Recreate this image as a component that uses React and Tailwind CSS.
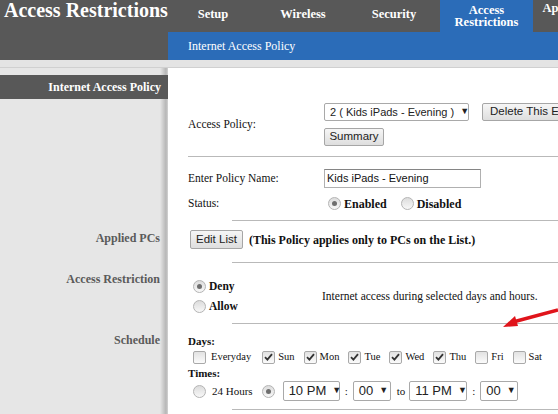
import React from 'react';

const serif = "font-['Liberation_Serif',serif]";
const sans = "font-['Liberation_Sans',Arial,sans-serif]";

// left rail: flat grey with a soft shade along its right edge
const rail = 'bg-[linear-gradient(to_right,#e6e6e6_160px,#b6b6b6_166px,#d4d4d4_168px)]';

const tabs = [
  { label: 'Setup', w: 'w-[90px]' },
  { label: 'Wireless', w: 'w-[90px]' },
  { label: 'Security', w: 'w-[92px]' },
  { label: ['Access', 'Restrictions'], w: 'w-[93px]', active: true },
  { label: ['Applications &', 'Gaming'], w: 'w-[100px]', top: true },
];

const Radio = ({ checked }) => (
  <span className="flex items-center justify-center w-[13px] h-[13px] shrink-0 rounded-full border border-[#b4b4b4] bg-gradient-to-b from-[#dcdcdc] to-[#f8f8f8]">
    {checked && <span className="w-[5px] h-[5px] rounded-full bg-[#6e6e6e]" />}
  </span>
);

const Checkbox = ({ checked }) => (
  <span className="flex items-center justify-center w-[13px] h-[13px] shrink-0 rounded-[2px] border border-[#a9a9a9] bg-gradient-to-b from-[#e2e2e2] to-[#fbfbfb]">
    {checked && (
      <svg width="9" height="8" viewBox="0 0 9 8">
        <path d="M1 4.2 L3.4 6.6 L8 1.2" fill="none" stroke="#333" strokeWidth="1.8" />
      </svg>
    )}
  </span>
);

const Button = ({ children, className = '' }) => (
  <span className={`${sans} inline-flex items-center px-[5px] text-[11.5px] text-[#222] border border-[#a6a6a6] rounded-[2px] bg-gradient-to-b from-[#f6f6f6] to-[#dedede] ${className}`}>
    {children}
  </span>
);

const Select = ({ children, className = '' }) => (
  <span className={`${sans} inline-flex items-center justify-between px-[5px] text-[#222] bg-white border border-[#a9a9a9] rounded-[2px] ${className}`}>
    <span>{children}</span>
    <span className="text-[9px] ml-[6px]">▼</span>
  </span>
);

const Row = ({ label, labelClass = 'pt-[8px]', inset = 'ml-[64px]', children }) => (
  <div className="grid grid-cols-[168px_1fr]">
    <div className={`${rail} ${labelClass}`}>
      {typeof label === 'string' ? (
        <div className="pr-[8px] text-right text-[12px] leading-[14px] font-bold text-[#5a5a5a]">{label}</div>
      ) : (
        label
      )}
    </div>
    <div className="flex flex-col">
      <div className="flex-1">{children}</div>
      <div className={`${inset} h-px bg-[#b9b9b9]`} />
    </div>
  </div>
);

export default function App() {
  return (
    <div className={`relative w-[558px] h-[414px] overflow-hidden bg-white ${serif}`}>
      {/* top bar: page title + tabs + sub menu */}
      <div className="grid grid-cols-[168px_1fr] bg-[#585858] h-[60px]">
        <div className="pl-[4px] text-[20px] font-bold text-white leading-[20px] whitespace-nowrap">
          Access Restrictions
        </div>
        <div className="flex flex-col overflow-hidden">
          <div className="flex h-[32px] whitespace-nowrap">
            {tabs.map((t, i) => (
              <div
                key={i}
                className={`${t.w} shrink-0 flex flex-col items-center ${
                  t.top ? 'justify-start pt-[2px]' : Array.isArray(t.label) ? 'justify-center' : 'justify-center pb-[4px]'
                } text-white font-bold text-[12.5px] leading-[12px] ${t.active ? 'bg-[#2b6cb8]' : ''}`}
              >
                {Array.isArray(t.label) ? t.label.map((l) => <span key={l}>{l}</span>) : t.label}
              </div>
            ))}
          </div>
          <div className="h-[28px] bg-[#2b6cb8] flex items-center pl-[20px] text-white text-[12px]">
            Internet Access Policy
          </div>
        </div>
      </div>
      <div className="h-[8px] bg-[#e4e4e4] border-b border-[#d0d0d0]" />

      {/* policy selector */}
      <Row
        inset="ml-[20px]"
        labelClass="pt-[7px]"
        label={
          <div className="h-[24px] bg-[#585858] flex items-center justify-end pr-[7px] text-white font-bold text-[12px]">
            Internet Access Policy
          </div>
        }
      >
        <div className="flex items-center pl-[20px] pt-[35px] pb-[10px] text-[11.5px] text-[#111]">
          <div className="w-[136px]">Access Policy:</div>
          <div className="flex flex-col gap-[7px]">
            <div className="flex items-center gap-[13px] whitespace-nowrap">
              <Select className="w-[145px] h-[18px] text-[11px]">2 ( Kids iPads - Evening )</Select>
              <Button className="h-[18px] px-[7px]">Delete This Entry</Button>
            </div>
            <div>
              <Button className="h-[18px] w-[60px] justify-center">Summary</Button>
            </div>
          </div>
        </div>
      </Row>

      {/* policy name + status */}
      <Row label="">
        <div className="pl-[20px] pt-[12px] pb-[8px] text-[11.5px] text-[#111]">
          <div className="flex items-center h-[19px]">
            <div className="w-[136px]">Enter Policy Name:</div>
            <span className={`${sans} w-[157px] h-[19px] flex items-center px-[2px] text-[11px] border border-[#b0b0b0] border-t-[#858585]`}>
              Kids iPads - Evening
            </span>
          </div>
          <div className="flex items-center h-[17px] mt-[7px]">
            <div className="w-[140px]">Status:</div>
            <Radio checked />
            <span className="ml-[3px] font-bold text-[12px]">Enabled</span>
            <span className="ml-[14px]"><Radio /></span>
            <span className="ml-[3px] font-bold text-[12px]">Disabled</span>
          </div>
        </div>
      </Row>

      {/* applied PCs */}
      <Row label="Applied PCs" labelClass="pt-[10px]">
        <div className="flex items-center pl-[22px] pt-[9px] pb-[13px] whitespace-nowrap">
          <Button className="h-[19px]">Edit List</Button>
          <span className="ml-[6px] font-bold text-[12px] text-[#111]">
            (This Policy applies only to PCs on the List.)
          </span>
        </div>
      </Row>

      {/* deny / allow */}
      <Row label="Access Restriction" labelClass="pt-[9px]">
        <div className="flex items-center pl-[25px] pt-[17px] pb-[10px] text-[11.5px] text-[#111]">
          <div className="w-[129px] flex flex-col gap-[7px] font-bold">
            <div className="flex items-center gap-[3px] h-[13px]"><Radio checked />Deny</div>
            <div className="flex items-center gap-[3px] h-[13px]"><Radio />Allow</div>
          </div>
          <div>Internet access during selected days and hours.</div>
        </div>
      </Row>

      {/* schedule */}
      <Row label="Schedule" labelClass="pt-[9px]">
        <div className="pl-[20px] pt-[9px] pb-[8px] text-[11px] text-[#111] whitespace-nowrap">
          <div className="font-bold leading-[16px]">Days:</div>
          <div className="flex items-center h-[16px] pl-[5px] text-[10.5px]">
            <Checkbox />
            <span className="ml-[5px] mr-[11px]">Everyday</span>
            {[
              ['Sun', true],
              ['Mon', true],
              ['Tue', true],
              ['Wed', true],
              ['Thu', true],
              ['Fri', false],
              ['Sat', false],
            ].map(([d, on]) => (
              <React.Fragment key={d}>
                <Checkbox checked={on} />
                <span className="ml-[3px] mr-[9px]">{d}</span>
              </React.Fragment>
            ))}
          </div>
          <div className="font-bold leading-[16px]">Times:</div>
          <div className="flex items-center h-[20px] pl-[5px]">
            <Radio />
            <span className="ml-[6px]">24 Hours</span>
            <span className="ml-[9px]"><Radio checked /></span>
            <Select className="ml-[8px] w-[57px] h-[20px] text-[13px]">10 PM</Select>
            <span className="mx-[5px]">:</span>
            <Select className="w-[38px] h-[20px] text-[13px]">00</Select>
            <span className="ml-[6px] mr-[4px]">to</span>
            <Select className="w-[58px] h-[20px] text-[13px]">11 PM</Select>
            <span className="mx-[5px]">:</span>
            <Select className="w-[38px] h-[20px] text-[13px]">00</Select>
          </div>
        </div>
      </Row>
      <div className="grid grid-cols-[168px_1fr] h-[20px]">
        <div className={rail} />
        <div />
      </div>

      {/* red annotation arrow */}
      <svg className="absolute left-[495px] top-[304px]" width="63" height="28" viewBox="0 0 63 28">
        <path d="M63 6 L18 18" stroke="#e0141b" strokeWidth="3.5" fill="none" />
        <path d="M8 23 L20 12 L23 22 Z" fill="#e0141b" />
      </svg>
    </div>
  );
}
